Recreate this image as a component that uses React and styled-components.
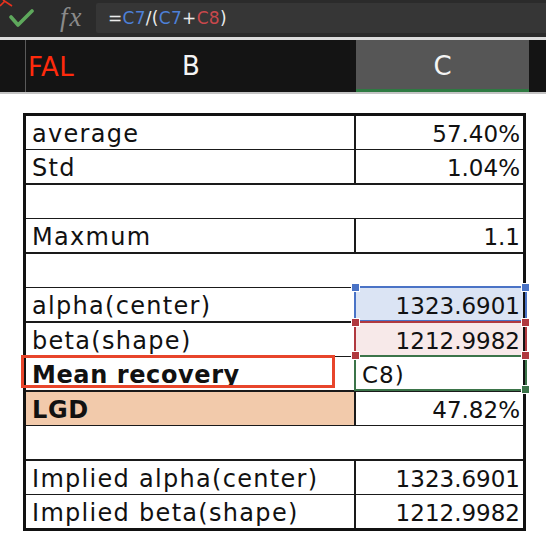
import styled, { createGlobalStyle } from "styled-components";

const GlobalStyle = createGlobalStyle`
  html, body {
    margin: 0;
    padding: 0;
    background: #fff;
  }
  body {
    width: 546px;
    height: 549px;
    overflow: hidden;
    font-family: "DejaVu Sans", "Liberation Sans", sans-serif;
  }
`;

const rows = [
    { label: "average", value: "57.40%" },
    { label: "Std", value: "1.04%" },
    { blank: true },
    { label: "Maxmum", value: "1.1" },
    { blank: true },
    { label: "alpha(center)", value: "1323.6901", range: "blue", corners: ["tl", "tr"] },
    { label: "beta(shape)", value: "1212.9982", range: "red", corners: ["tl", "tr", "bl", "br"] },
    { label: "Mean recovery", value: "C8)", bold: true, focus: true, range: "green", corners: ["br"], editing: true },
    { label: "LGD", value: "47.82%", bold: true, labelFill: "#f2caab" },
    { blank: true },
    { label: "Implied alpha(center)", value: "1323.6901" },
    { label: "Implied beta(shape)", value: "1212.9982" },
];

const rangeColors = {
    blue: { line: "#4a73c6", fill: "#dbe4f4" },
    red: { line: "#b0393f", fill: "#f7e9e9" },
    green: { line: "#3b7449", fill: "#fff" },
};

function App() {
    return (
        <>
            <GlobalStyle />
            <FormulaBar>
                <CancelMark width="14" height="7" viewBox="0 0 14 7">
                    <line x1="0" y1="6" x2="5" y2="1" />
                    <line x1="3" y1="0" x2="12" y2="6" />
                </CancelMark>
                <CheckMark width="26" height="20" viewBox="0 0 26 20">
                    <polyline points="2,8 9,16 23,2" />
                </CheckMark>
                <FxLabel>fx</FxLabel>
                <FormulaInput>
                    <span>=</span>
                    <Ref $color="#4d80d8">C7</Ref>
                    <span>/(</span>
                    <Ref $color="#4d80d8">C7</Ref>
                    <span>+</span>
                    <Ref $color="#c9484c">C8</Ref>
                    <span>)</span>
                </FormulaInput>
            </FormulaBar>
            <Separator />
            <HeaderRow>
                <RowHeadCorner />
                <ColumnHead $width={330}>
                    <Overflow>FAL</Overflow>B
                </ColumnHead>
                <ColumnHead $width={173} $active>
                    C
                </ColumnHead>
            </HeaderRow>
            <Sheet>
                <Table>
                    {rows.map((row, i) =>
                        row.blank ? (
                            <BlankRow key={i} />
                        ) : (
                            <Row key={i} row={row} />
                        )
                    )}
                </Table>
            </Sheet>
        </>
    );
}

function Row({ row }) {
    const range = row.range ? rangeColors[row.range] : null;
    return (
        <>
            <LabelCell $bold={row.bold} $fill={row.labelFill}>
                {row.label}
                {row.focus && <FocusBox />}
            </LabelCell>
            <ValueCell $fill={range ? range.fill : null} $editing={row.editing}>
                {row.value}
                {range && (
                    <RangeBox $color={range.line}>
                        {row.corners.map((c) => (
                            <Handle key={c} $pos={c} $color={range.line} />
                        ))}
                    </RangeBox>
                )}
            </ValueCell>
        </>
    );
}

const FormulaBar = styled.div`
    position: relative;
    height: 37px;
    background: #2b2b2b;
    display: flex;
    align-items: center;
`;

const CancelMark = styled.svg`
    position: absolute;
    top: 0;
    left: 0;
    stroke: #e8321e;
    stroke-width: 1.6;
`;

const CheckMark = styled.svg`
    margin-left: 9px;
    fill: none;
    stroke: #5ea85c;
    stroke-width: 3.6;
    stroke-linecap: round;
    stroke-linejoin: round;
`;

const FxLabel = styled.span`
    margin-left: 25px;
    width: 26px;
    font-family: "Liberation Serif", serif;
    font-style: italic;
    font-size: 27px;
    color: #8a8a8a;
    letter-spacing: 2px;
    padding-bottom: 3px;
`;

const FormulaInput = styled.div`
    margin-left: 10px;
    align-self: stretch;
    margin-top: 3px;
    margin-bottom: 4px;
    flex: 1;
    background: #363636;
    border-radius: 2px 0 0 2px;
    display: flex;
    align-items: center;
    padding-left: 12px;
    font-size: 17px;
    color: #ececec;
    letter-spacing: 0.3px;
`;

const Ref = styled.span`
    color: ${(p) => p.$color};
`;

const Separator = styled.div`
    height: 3px;
    background: #dcdcdc;
`;

const HeaderRow = styled.div`
    height: 52px;
    background: #141414;
    display: flex;
    border-bottom: 2px solid #c4c4c4;
`;

const RowHeadCorner = styled.div`
    width: 25px;
    border-right: 1px solid #5a5a5a;
`;

const ColumnHead = styled.div`
    position: relative;
    width: ${(p) => p.$width}px;
    box-sizing: border-box;
    display: flex;
    align-items: center;
    justify-content: center;
    font-size: 26px;
    color: #f4f4f4;
    padding-top: 3px;
    background: ${(p) => (p.$active ? "#565656" : "transparent")};
    border-bottom: 3px solid ${(p) => (p.$active ? "#2e7a42" : "transparent")};
`;

const Overflow = styled.span`
    position: absolute;
    left: 2px;
    top: 50%;
    transform: translateY(-45%);
    color: #ff2a0c;
    letter-spacing: 0.5px;
`;

const Sheet = styled.div`
    padding: 19px 0 0 23px;
`;

const Table = styled.div`
    width: 503px;
    box-sizing: border-box;
    border: 3px solid #111;
    background: #1a1a1a;
    display: grid;
    grid-template-columns: 328px 167px;
    grid-auto-rows: 32.8px;
    column-gap: 2px;
    row-gap: 1.7px;
`;

const BaseCell = styled.div`
    position: relative;
    display: flex;
    align-items: flex-end;
    padding-bottom: 3px;
    box-sizing: border-box;
    color: #111;
    line-height: 1;
    white-space: nowrap;
`;

const LabelCell = styled(BaseCell)`
    background: ${(p) => p.$fill || "#fff"};
    padding-left: 6px;
    font-size: 24px;
    font-weight: ${(p) => (p.$bold ? 700 : 400)};
    letter-spacing: ${(p) => (p.$bold ? "0.6px" : "1.3px")};
`;

const ValueCell = styled(BaseCell)`
    background: ${(p) => p.$fill || "#fff"};
    justify-content: ${(p) => (p.$editing ? "flex-start" : "flex-end")};
    padding-left: ${(p) => (p.$editing ? "6px" : "0")};
    padding-right: 3px;
    font-size: 23px;
    letter-spacing: ${(p) => (p.$editing ? "1px" : "0")};
`;

const BlankRow = styled.div`
    grid-column: 1 / -1;
    background: #fff;
`;

const FocusBox = styled.span`
    position: absolute;
    top: -2px;
    bottom: 2px;
    left: -5px;
    right: 19px;
    border: 3px solid #e8452b;
    pointer-events: none;
`;

const RangeBox = styled.span`
    position: absolute;
    top: -2px;
    bottom: -1px;
    left: -2px;
    right: -4px;
    border: 2.5px solid ${(p) => p.$color};
    pointer-events: none;
`;

const handleSpots = {
    tl: "top: -5px; left: -5px;",
    tr: "top: -5px; right: -5px;",
    bl: "bottom: -5px; left: -5px;",
    br: "bottom: -5px; right: -5px;",
};

const Handle = styled.span`
    position: absolute;
    ${(p) => handleSpots[p.$pos]}
    width: 7px;
    height: 7px;
    background: ${(p) => p.$color};
    border: 1px solid #fff;
    z-index: 2;
`;

export default App;
